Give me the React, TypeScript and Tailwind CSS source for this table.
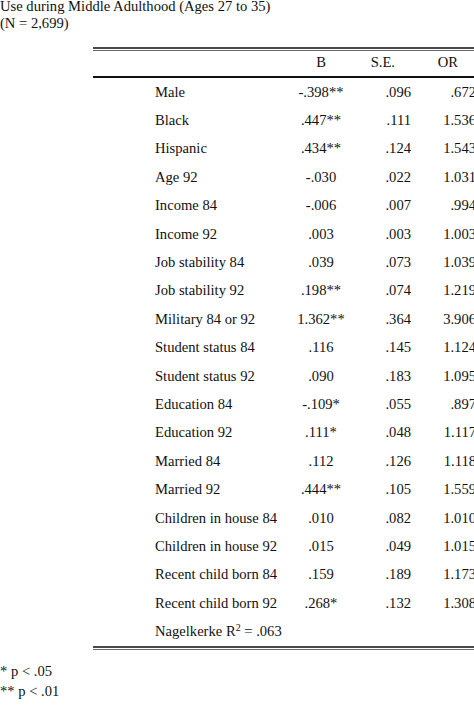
import React from "react";

type Row = { label: React.ReactNode; b?: string; se?: string; or?: string };

const rows: Row[] = [
  { label: "Male", b: "-.398**", se: ".096", or: ".672" },
  { label: "Black", b: ".447**", se: ".111", or: "1.536" },
  { label: "Hispanic", b: ".434**", se: ".124", or: "1.543" },
  { label: "Age 92", b: "-.030", se: ".022", or: "1.031" },
  { label: "Income 84", b: "-.006", se: ".007", or: ".994" },
  { label: "Income 92", b: ".003", se: ".003", or: "1.003" },
  { label: "Job stability 84", b: ".039", se: ".073", or: "1.039" },
  { label: "Job stability 92", b: ".198**", se: ".074", or: "1.219" },
  { label: "Military 84 or 92", b: "1.362**", se: ".364", or: "3.906" },
  { label: "Student status 84", b: ".116", se: ".145", or: "1.124" },
  { label: "Student status 92", b: ".090", se: ".183", or: "1.095" },
  { label: "Education 84", b: "-.109*", se: ".055", or: ".897" },
  { label: "Education 92", b: ".111*", se: ".048", or: "1.117" },
  { label: "Married 84", b: ".112", se: ".126", or: "1.118" },
  { label: "Married 92", b: ".444**", se: ".105", or: "1.559" },
  { label: "Children in house 84", b: ".010", se: ".082", or: "1.010" },
  { label: "Children in house 92", b: ".015", se: ".049", or: "1.015" },
  { label: "Recent child born 84", b: ".159", se: ".189", or: "1.173" },
  { label: "Recent child born 92", b: ".268*", se: ".132", or: "1.308" },
  {
    label: (
      <>
        Nagelkerke R<sup className="text-[10px]">2</sup> = .063
      </>
    ),
  },
];

const DoubleRule = () => (
  <div>
    <div className="h-[2px] bg-[#4a4a4a]" />
    <div className="h-px bg-white" />
    <div className="h-px bg-[#6a6a6a]" />
  </div>
);

export default function App() {
  return (
    <div className="w-[474px] h-[706px] overflow-hidden bg-white text-[#111] font-['Liberation_Serif',serif] text-[14.6px] leading-[17px]">
      <div className="-mt-[2.4px]">
        <p>Use during Middle Adulthood (Ages 27 to 35)</p>
        <p>(N = 2,699)</p>
      </div>

      <div className="ml-[93px] mt-[15.4px] w-[387px]">
        <DoubleRule />
        <div className="grid grid-cols-[198px_60px_60px_69px] h-[25px] pt-[2.5px]">
          <div />
          <div className="text-center">B</div>
          <div className="text-right pr-[16px]">S.E.</div>
          <div className="text-right pr-[22px]">OR</div>
        </div>
        <div className="h-[2px] bg-[#111]" />
        {rows.map((r, i) => (
          <div key={i} className="grid grid-cols-[198px_60px_60px_69px] h-[28.4px] items-center">
            <div className="pl-[62px] whitespace-nowrap">{r.label}</div>
            <div className="text-center whitespace-nowrap">{r.b}</div>
            <div className="text-right">{r.se}</div>
            <div className="text-right pr-[4px]">{r.or}</div>
          </div>
        ))}
        <DoubleRule />
      </div>

      <div className="mt-[11px] leading-[20px]">
        <p>* p &lt; .05</p>
        <p>** p &lt; .01</p>
      </div>
    </div>
  );
}
